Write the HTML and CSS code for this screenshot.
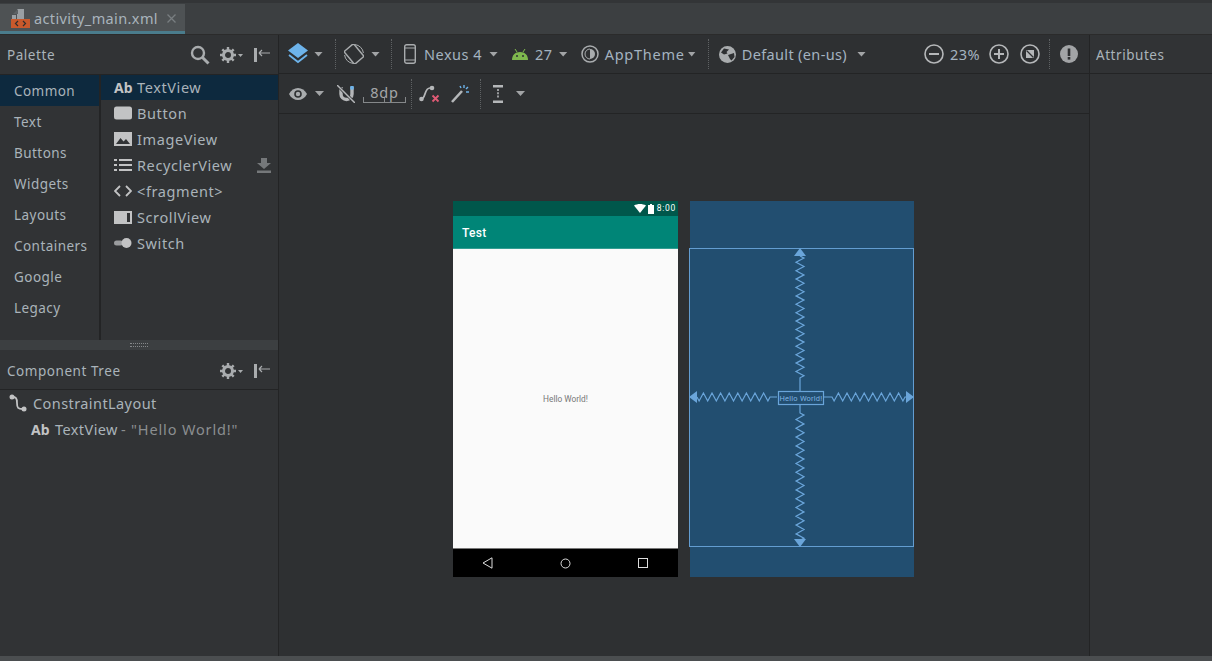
FILE: index.html
```html
<!DOCTYPE html>
<html lang="en">
<head>
<meta charset="utf-8">
<title>activity_main.xml</title>
<link rel="stylesheet" href="styles.css">
</head>
<body>
<div class="app">
  <header class="tabstrip">
    <div class="tab">
      <svg class="tab-icon" width="20" height="20" viewBox="0 0 20 20"><path d="M6 1h7v11H6z M1 7h4v5H1z" fill="#9a9fa3"/><path d="M7 1l-5 5h5z" fill="#5d6265"/><rect y="11" width="19" height="9" fill="#c9592c"/><path d="M7 13l-2.500 2.500L7 18M12 13l2.500 2.500L12 18" fill="none" stroke="#2e2e2e" stroke-width="1.200"/></svg>
      <span class="tab-name">activity_main.xml</span>
      <svg class="tab-close" width="9" height="9" viewBox="0 0 9 9"><path d="M.5.5l8 8M8.500.5l-8 8" stroke="#797e81" stroke-width="1.300"/></svg>
    </div>
  </header>
  <main class="workspace">
    <aside class="left">
      <section class="palette">
        <div class="panel-head">
          <span class="panel-title">Palette</span>
          <span class="head-tools">
            <svg class="h-search" width="20" height="20" viewBox="0 0 20 20"><circle cx="8" cy="8" r="6" fill="none" stroke="#a9acae" stroke-width="2.400"/><path d="M12.500 12.500L18.500 18.500" stroke="#a9acae" stroke-width="3"/></svg>
            <svg class="h-gear" width="24" height="16" viewBox="0 0 24 16"><circle cx="8" cy="8" r="4.500" fill="none" stroke="#a9acae" stroke-width="3"/><path d="M8 0v3M8 13v3M0 8h3M13 8h3M2.300 2.300l2.200 2.200M11.500 11.500l2.200 2.200M13.700 2.300l-2.200 2.200M4.500 11.500l-2.200 2.200" stroke="#a9acae" stroke-width="2.400"/><path d="M18 7h5l-2.500 3z" fill="#a9acae"/></svg>
            <svg class="h-pin" width="16" height="16" viewBox="0 0 16 16"><path d="M0 1h3v14H0z" fill="#a9acae"/><path d="M5 6h11M5 6l3-3M5 6l3 3" fill="none" stroke="#a9acae" stroke-width="1.200"/></svg>
          </span>
        </div>
        <div class="palette-body">
          <ul class="cats">
            <li class="cat cat-on">Common</li>
            <li class="cat">Text</li>
            <li class="cat">Buttons</li>
            <li class="cat">Widgets</li>
            <li class="cat">Layouts</li>
            <li class="cat">Containers</li>
            <li class="cat">Google</li>
            <li class="cat">Legacy</li>
          </ul>
          <ul class="widgets">
            <li class="widget widget-on"><b class="ab">Ab</b>TextView</li>
            <li class="widget"><svg class="wi" width="18" height="14" viewBox="0 0 18 14"><rect y="0.500" width="18" height="13" rx="2.500" fill="#c2c3c4"/></svg>Button</li>
            <li class="widget"><svg class="wi" width="18" height="16" viewBox="0 0 18 16"><path d="M0 1h18v14H0z" fill="#c2c3c4"/><path d="M2 13l4.500-6 3 3.500 2.500-2.500 4 5z" fill="#313335"/></svg>ImageView</li>
            <li class="widget"><svg class="wi" width="18" height="14" viewBox="0 0 18 14"><path d="M0 2h3M5 2h13M0 7h3M5 7h13M0 12h3M5 12h13" stroke="#c2c3c4" stroke-width="2"/></svg>RecyclerView<svg class="dl" width="14" height="15" viewBox="0 0 14 15"><path d="M4 0h6v5h4l-7 6-7-6h4zM0 12.500h14V15H0z" fill="#75787a"/></svg></li>
            <li class="widget"><svg class="wi" width="18" height="12" viewBox="0 0 18 12"><path d="M6 1L1 6l5 5M12 1l5 5-5 5" fill="none" stroke="#c2c3c4" stroke-width="1.800"/></svg>&lt;fragment&gt;</li>
            <li class="widget"><svg class="wi" width="18" height="13" viewBox="0 0 18 13"><path d="M0 0h18v13H0z" fill="#c2c3c4"/><path d="M13 2h3v9h-3z" fill="#313335"/></svg>ScrollView</li>
            <li class="widget"><svg class="wi" width="18" height="12" viewBox="0 0 18 12"><rect y="3.500" width="9" height="5" rx="2.500" fill="#9a9c9e"/><circle cx="12.500" cy="6" r="5" fill="#c2c3c4"/></svg>Switch</li>
          </ul>
        </div>
      </section>
      <div class="splitter"><span class="grip"></span></div>
      <section class="tree">
        <div class="panel-head tree-head">
          <span class="panel-title">Component Tree</span>
          <span class="head-tools">
            <svg class="h-gear" width="24" height="16" viewBox="0 0 24 16"><circle cx="8" cy="8" r="4.500" fill="none" stroke="#a9acae" stroke-width="3"/><path d="M8 0v3M8 13v3M0 8h3M13 8h3M2.300 2.300l2.200 2.200M11.500 11.500l2.200 2.200M13.700 2.300l-2.200 2.200M4.500 11.500l-2.200 2.200" stroke="#a9acae" stroke-width="2.400"/><path d="M18 7h5l-2.500 3z" fill="#a9acae"/></svg>
            <svg class="h-pin" width="16" height="16" viewBox="0 0 16 16"><path d="M0 1h3v14H0z" fill="#a9acae"/><path d="M5 6h11M5 6l3-3M5 6l3 3" fill="none" stroke="#a9acae" stroke-width="1.200"/></svg>
          </span>
        </div>
        <div class="tree-row tree-root">
          <svg class="tree-icon" width="18" height="18" viewBox="0 0 18 18"><path d="M3 3c4 0 5 1 5 6s1 6 6 6" fill="none" stroke="#c2c3c4" stroke-width="1.800"/><circle cx="3" cy="3" r="2.500" fill="#c2c3c4"/><circle cx="15" cy="15" r="2.500" fill="#c2c3c4"/></svg>
          ConstraintLayout
        </div>
        <div class="tree-row tree-child"><b class="ab ab-tree">Ab</b>TextView<span class="tree-value">- "Hello World!"</span></div>
      </section>
    </aside>

    <section class="center">
      <div class="toolbar tb1">
        <svg class="t-layers" width="20" height="24" viewBox="0 0 20 24"><path d="M10 1l10 7.500-10 7.500L0 8.500z" fill="#6db3ea"/><path d="M1 13l9 7 9-7" fill="none" stroke="#6db3ea" stroke-width="1.800"/></svg>
        <i class="caret c6"></i><i class="sep s12"></i>
        <svg class="t-rot" width="20" height="20" viewBox="0 0 20 20"><rect x="3.800" y="1.700" width="12.400" height="16.600" rx="1.500" transform="rotate(-40 10 10)" fill="none" stroke="#a9acae" stroke-width="1.400"/><path d="M11 .6A9.500 9.500 0 0 1 19.400 9M9 19.400A9.500 9.500 0 0 1 .6 11" fill="none" stroke="#a9acae"/></svg>
        <i class="caret c7"></i><i class="sep s11"></i>
        <svg class="t-phone" width="12" height="20" viewBox="0 0 12 20"><rect x="0.700" y="0.700" width="10.600" height="18.600" rx="2" fill="none" stroke="#a9acae" stroke-width="1.400"/><path d="M1 4h10M1 16h10" stroke="#a9acae"/></svg>
        <span class="t-text nexus">Nexus 4</span>
        <i class="caret c7"></i>
        <svg class="t-droid" width="16" height="11" viewBox="0 0 16 11"><path d="M0 11c0-5 3-8 8-8s8 3 8 8z" fill="#7fb84e"/><path d="M3 0l2 3M13 0l-2 3" stroke="#7fb84e"/><circle cx="5" cy="7" r="1" fill="#2e3032"/><circle cx="11" cy="7" r="1" fill="#2e3032"/></svg>
        <span class="t-text api">27</span>
        <i class="caret c6"></i>
        <svg class="t-theme" width="18" height="18" viewBox="0 0 18 18"><circle cx="9" cy="9" r="8" fill="none" stroke="#a9acae" stroke-width="1.500"/><path d="M9 4a5 5 0 0 1 0 10z" fill="#a9acae"/><path d="M9 4a5 5 0 0 0 0 10" fill="none" stroke="#a9acae"/></svg>
        <span class="t-text theme">AppTheme</span>
        <i class="caret c3 small"></i><i class="sep s12"></i>
        <svg class="t-globe" width="17" height="17" viewBox="0 0 17 17"><circle cx="8.500" cy="8.500" r="8.500" fill="#a9acae"/><path d="M5 2.500l5 1-2.500 2.500 1 1.500-3.500 1-3-2zM9 9l6-2 .5 4-3 3.500-1.500-1.500z" fill="#2e3032"/></svg>
        <span class="t-text locale">Default (en-us)</span>
        <i class="caret c10"></i>
        <svg class="t-zoom-out" width="20" height="20" viewBox="0 0 20 20"><circle cx="10" cy="10" r="9" fill="none" stroke="#b5b7b9" stroke-width="1.600"/><path d="M5 10h10" stroke="#b5b7b9" stroke-width="2"/></svg>
        <span class="t-text pct">23%</span>
        <svg class="t-zoom-in" width="20" height="20" viewBox="0 0 20 20"><circle cx="10" cy="10" r="9" fill="none" stroke="#b5b7b9" stroke-width="1.600"/><path d="M5 10h10M10 5v10" stroke="#b5b7b9" stroke-width="2"/></svg>
        <svg class="t-fit" width="20" height="20" viewBox="0 0 20 20"><circle cx="10" cy="10" r="9" fill="none" stroke="#b5b7b9" stroke-width="1.600"/><path d="M6 6h8v8H6z" fill="#b5b7b9"/><path d="M6.500 6.500l7 7" stroke="#2e3032" stroke-width="1.200"/></svg>
        <i class="sep s8"></i>
        <svg class="t-warn" width="18" height="18" viewBox="0 0 18 18"><circle cx="9" cy="9" r="9" fill="#a2a4a6"/><rect x="7.700" y="3.500" width="2.600" height="7.500" fill="#2e3032"/><rect x="7.700" y="12" width="2.600" height="2.600" fill="#2e3032"/></svg>
      </div>
      <div class="toolbar tb2">
        <svg class="t-eye" width="18" height="12" viewBox="0 0 18 12"><path d="M0 6c2-4 5.500-6 9-6s7 2 9 6c-2 4-5.500 6-9 6S2 10 0 6z" fill="#a9acae"/><circle cx="9" cy="6" r="3.800" fill="#2e3032"/><circle cx="9" cy="6" r="2.200" fill="#a9acae"/></svg>
        <i class="caret c8"></i>
        <svg class="t-magnet" width="18" height="18" viewBox="0 0 18 18"><path d="M4 2v7a5.500 5.500 0 0 0 11 0V2" fill="none" stroke="#b5b7b9" stroke-width="3.400"/><rect x="13.300" y="1" width="3.400" height="3.500" fill="#6db3ea"/><path d="M0 0l18 18" stroke="#2e3032" stroke-width="3"/><path d="M0 0l18 18" stroke="#b5b7b9" stroke-width="1.500"/></svg>
        <span class="gridsize">8dp</span>
        <i class="sep s5"></i>
        <svg class="t-conn" width="21" height="18" viewBox="0 0 21 18"><path d="M2 14c5 0 3-11 9-11" fill="none" stroke="#b5b7b9" stroke-width="1.700"/><circle cx="2.500" cy="14" r="2.300" fill="#b5b7b9"/><circle cx="13" cy="3" r="2.300" fill="#b5b7b9"/><path d="M13.500 10.500l6 6M19.500 10.500l-6 6" stroke="#e05a75" stroke-width="1.800"/></svg>
        <svg class="t-wand" width="19" height="19" viewBox="0 0 19 19"><path d="M1 18L11 7" stroke="#b5b7b9" stroke-width="2.600"/><path d="M13 1v3M17 3l-2 2M18 8h-3M9 2l1 2" stroke="#6db3ea" stroke-width="1.400"/></svg>
        <i class="sep s10"></i>
        <svg class="t-margin" width="10" height="18" viewBox="0 0 10 18"><path d="M0 0h10v2.500H0zM0 15.500h10V18H0z" fill="#b5b7b9"/><path d="M5 4v9" stroke="#b5b7b9" stroke-width="1.600" stroke-dasharray="2 1.200"/></svg>
        <i class="caret c13"></i>
      </div>
      <div class="canvas">
        <div class="phone">
          <div class="status">
            <svg width="12" height="9" viewBox="0 0 12 9"><path d="M0 1.500C3.500-.5 8.500-.5 12 1.500L6 9z" fill="#fff"/></svg>
            <svg class="batt" width="6" height="10" viewBox="0 0 6 10"><path d="M0 1h2V0h2v1h2v9H0z" fill="#fff"/></svg>
            <span class="clock">8:00</span>
          </div>
          <div class="appbar">Test</div>
          <div class="content"><span class="hello">Hello World!</span></div>
          <div class="navbar">
            <svg width="11" height="12" viewBox="0 0 11 12"><path d="M10 .8v10.400L1 6z" fill="none" stroke="#ddd" stroke-width="1"/></svg>
            <svg width="11" height="11" viewBox="0 0 11 11"><circle cx="5.500" cy="5.500" r="4.500" fill="none" stroke="#ddd"/></svg>
            <svg width="10" height="10" viewBox="0 0 10 10"><rect x="0.500" y="0.500" width="9" height="9" fill="none" stroke="#ddd"/></svg>
          </div>
        </div>
        <div class="blueprint">
          <svg class="bp-lines" width="226" height="376" viewBox="-1 0 226 376">
            <rect x="-0.500" y="47.500" width="224" height="298" fill="none" stroke="#639dd1"/>
            <g fill="none" stroke="#6aa5da" stroke-width="1.200">
              <path d="M110 55l4 2.100l-8 4.200 8 4.200-8 4.200 8 4.200-8 4.200 8 4.200-8 4.200 8 4.200-8 4.200 8 4.200-8 4.200 8 4.200-8 4.200 8 4.200-8 4.200 8 4.200-8 4.200 8 4.200-8 4.200 8 4.200-8 4.200 8 4.200-8 4.200 8 4.200-8 4.200 8 4.200-8 4.200 8 4.200l-4 2.100V190"/>
              <path d="M110 203v9l4 2.100-8 4.400 8 4.400-8 4.400 8 4.400-8 4.400 8 4.400-8 4.400 8 4.400-8 4.400 8 4.400-8 4.400 8 4.400-8 4.400 8 4.400-8 4.400 8 4.400-8 4.400 8 4.400-8 4.400 8 4.400-8 4.400 8 4.400-8 4.400 8 4.400-8 4.400 8 4.400-8 4.400 8 4.400l-4 2.100"/>
              <path d="M7 196l2.100 4 4.300-8 4.300 8 4.300-8 4.300 8 4.300-8 4.300 8 4.300-8 4.300 8 4.300-8 4.300 8 4.300-8 4.300 8 4.300-8 4.300 8 4.300-8 4.300 8 2.100-4h7"/>
              <path d="M133 196h9l2.100 4 4.300-8 4.300 8 4.300-8 4.300 8 4.300-8 4.300 8 4.300-8 4.300 8 4.300-8 4.300 8 4.300-8 4.300 8 4.300-8 4.300 8 4.300-8 4.300 8 2.100-4h2"/>
              <rect x="88.500" y="190.500" width="45" height="13"/>
            </g>
            <path d="M110 47l6 8h-12zM110 346l6-8h-12zM-1 196l8-6v12zM224 196l-8-6v12z" fill="#6aa5da"/>
          </svg>
          <span class="bp-hello">Hello World!</span>
        </div>
      </div>
    </section>

    <aside class="right">
      <div class="panel-head attrs"><span class="panel-title">Attributes</span></div>
    </aside>
  </main>
  <footer class="statusbar"></footer>
</div>
</body>
</html>
```
FILE: styles.css
```css
* { box-sizing: border-box; }
html, body { margin: 0; height: 100%; }
body {
  background: #2e3032;
  color: #aab3ba;
  font-family: "Noto Sans", "Open Sans", sans-serif;
  font-size: 14px;
  overflow: hidden;
}
ul { list-style: none; margin: 0; padding: 0; }
svg { display: block; flex: none; }
b { font-weight: 700; }

.app { height: 661px; display: flex; flex-direction: column; }

.tabstrip {
  height: 35px;
  background: #3c3f41;
  border-top: 3px solid #333537;
  border-bottom: 1px solid #2b2b2b;
  display: flex;
}
.tab {
  width: 185px;
  background: #4e5254;
  border-bottom: 3px solid #4a7c8c;
  margin-top: 1px;
  display: flex;
  align-items: center;
  padding: 0 0 0 11px;
}
.tab-name { margin-left: 3px; font-size: 14.500px; letter-spacing: .38px; color: #a9b4bc; }
.tab-close { margin-left: 9px; margin-top: 1px; }

.workspace { flex: 1; display: flex; min-height: 0; }

.left {
  width: 279px;
  flex: none;
  background: #313335;
  border-right: 1px solid #232425;
  display: flex;
  flex-direction: column;
}
.palette { height: 305px; display: flex; flex-direction: column; }
.panel-head {
  height: 40px;
  flex: none;
  display: flex;
  align-items: center;
  justify-content: space-between;
  padding: 0 8px 0 7px;
  border-bottom: 1px solid #232425;
}
.panel-title { font-size: 13.500px; letter-spacing: .55px; }
.head-tools { display: flex; align-items: center; }
.h-gear { margin-left: 10px; }
.h-pin { margin-left: 10px; }

.palette-body { flex: 1; display: flex; min-height: 0; }
.cats { width: 101px; flex: none; border-right: 2px solid #232425; }
.cat { height: 31px; line-height: 33px; padding-left: 14px; font-size: 13.500px; letter-spacing: .45px; }
.cat-on { background: #0d293e; }
.widgets { flex: 1; }
.widget {
  height: 26px;
  display: flex;
  align-items: center;
  padding-left: 13px;
  font-size: 14.500px;
  letter-spacing: .6px;
}
.widget-on { background: #0d293e; height: 25px; padding-bottom: 1px; }
.ab { width: 23px; flex: none; font-size: 14px; letter-spacing: 0; color: #c2c3c4; }
.wi { margin-right: 5px; }
.dl { margin-left: auto; margin-right: 7px; }

.splitter {
  height: 10px;
  flex: none;
  background: #3c3f41;
  display: flex;
  justify-content: center;
  align-items: center;
}
.grip { width: 18px; height: 4px; border-top: 1px dotted #85888a; border-bottom: 1px dotted #85888a; }

.tree { flex: 1; }
.tree-head { padding-top: 2px; }
.tree-row { display: flex; align-items: center; height: 26px; font-size: 14.500px; letter-spacing: .42px; }
.tree-root { padding-left: 9px; }
.tree-icon { margin-right: 6px; }
.tree-child { padding-left: 31px; }
.ab-tree { width: 24px; }
.tree-value { color: #8b8e90; margin-left: 3px; letter-spacing: .85px; }

.center { flex: 1; display: flex; flex-direction: column; min-width: 0; }
.toolbar {
  flex: none;
  display: flex;
  align-items: center;
  padding-left: 9px;
  border-bottom: 1px solid #232425;
}
.tb1 { height: 39px; }
.tb2 { height: 40px; }
.t-text { font-size: 14.500px; letter-spacing: .5px; color: #a4b3c0; }
.caret {
  width: 9px; height: 5px; flex: none;
  background: #a2a4a6;
  clip-path: polygon(0 0, 100% 0, 50% 100%);
}
.caret.small { width: 8px; }
.c3 { margin-left: 3px; }
.c6 { margin-left: 6px; }
.c7 { margin-left: 7px; }
.c8 { margin-left: 8px; }
.c10 { margin-left: 10px; }
.c13 { margin-left: 13px; }
.sep { width: 1px; height: 30px; flex: none; border-left: 1px dotted #5f6264; }
.s5 { margin: 0 7px 0 5px; }
.s8 { margin: 0 10px 0 9px; }
.s10 { margin: 0 12px 0 10px; }
.s11 { margin: 0 12px 0 11px; }
.s12 { margin: 0 8px 0 12px; }
.nexus { margin-left: 8px; }
.t-droid { margin-left: 14px; }
.api { margin-left: 7px; }
.t-theme { margin-left: 13px; }
.theme { margin-left: 6px; letter-spacing: .75px; }
.t-globe { margin-left: 2px; }
.locale { margin-left: 6px; letter-spacing: .35px; }
.t-zoom-out { margin-left: 58px; }
.pct { margin-left: 6px; }
.t-zoom-in { margin-left: 9px; }
.t-fit { margin-left: 11px; }
.t-eye { margin-left: 1px; }
.t-magnet { margin-left: 13px; }
.gridsize {
  margin-left: 8px;
  width: 43px;
  height: 18px;
  margin-top: 1px;
  line-height: 15px;
  text-align: center;
  font-size: 14.500px;
  letter-spacing: .8px;
  color: #a4a6a8;
  background:
    linear-gradient(#85888a, #85888a) left bottom / 1px 6px no-repeat,
    linear-gradient(#85888a, #85888a) center bottom / 1px 6px no-repeat,
    linear-gradient(#85888a, #85888a) right bottom / 1px 6px no-repeat,
    linear-gradient(#85888a, #85888a) left bottom / 100% 1px no-repeat;
}
.t-wand { margin-left: 11px; }

.canvas {
  flex: 1;
  display: flex;
  align-items: flex-start;
  gap: 12px;
  padding: 87px 0 0 174px;
}
.phone { width: 225px; height: 376px; display: flex; flex-direction: column; }
.status {
  height: 15px;
  background: #00574b;
  display: flex;
  align-items: center;
  justify-content: flex-end;
  padding-right: 2px;
}
.batt { margin-left: 2px; }
.clock { margin-left: 3px; font: 8.500px/1 "Roboto", sans-serif; letter-spacing: .7px; color: #fff; }
.appbar {
  height: 33px;
  background: #008577;
  border-bottom: 1px solid #339d92;
  padding-left: 9px;
  font: 500 12px/34px "Roboto", sans-serif;
  letter-spacing: .3px;
  color: #fff;
}
.content {
  height: 300px;
  background: #fafafa;
  border-bottom: 1px solid #777;
  display: flex;
  align-items: center;
  justify-content: center;
  padding-top: 2px;
}
.hello { font: 8.300px/1 "Roboto", sans-serif; color: #777; }
.navbar {
  height: 28px;
  background: #000;
  display: flex;
  align-items: center;
  justify-content: space-between;
  padding: 0 30px 0 29px;
}
.blueprint { width: 224px; height: 376px; background: #224e70; position: relative; flex: none; }
.bp-lines { position: absolute; left: -1px; top: 0; }
.bp-hello {
  position: absolute;
  left: 89px;
  top: 191px;
  width: 44px;
  height: 12px;
  font: 7.500px/13px "Roboto", sans-serif;
  letter-spacing: .2px;
  text-align: center;
  color: #7fb4e2;
}

.right {
  width: 123px;
  flex: none;
  background: #313335;
  border-left: 1px solid #232425;
}
.attrs { height: 39px; padding: 2px 8px 0 6px; }

.statusbar { height: 5px; flex: none; background: #4b4e50; }
```
